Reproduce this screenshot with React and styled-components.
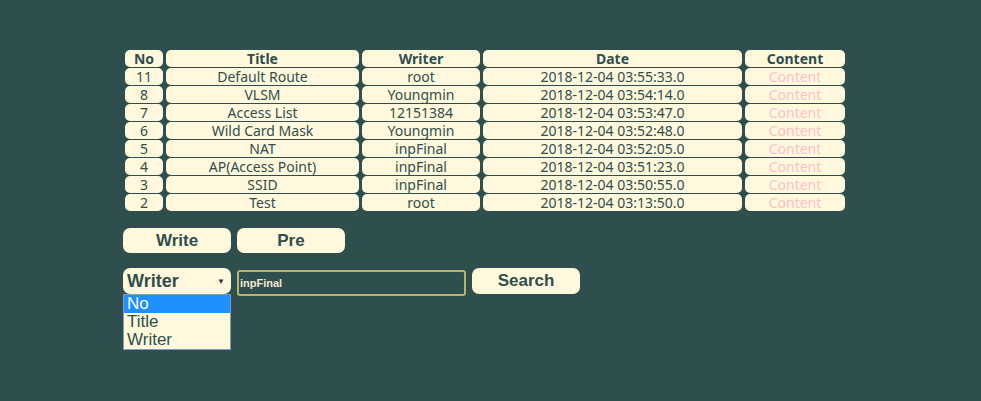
import React from "react";
import styled, { createGlobalStyle } from "styled-components";

const Global = createGlobalStyle`
  html, body { margin: 0; padding: 0; background: #2f4f4f; }
  body { width: 981px; height: 401px; overflow: hidden; }
`;

const Page = styled.div`
  padding: 49px 0 0 123px;
  display: flex;
  flex-direction: column;
  align-items: flex-start;
`;

const Table = styled.table`
  border-collapse: separate;
  border-spacing: 3px 1px;
  margin-left: -1px;
  font-family: "Noto Sans", "Open Sans", sans-serif;
  font-size: 14px;
  color: #2f4f4f;
`;

const Th = styled.th`
  background: #fff8dc;
  border-radius: 5px;
  height: 17px;
  padding: 0;
  line-height: 17px;
  font-weight: 700;
  width: ${(p) => p.$w}px;
`;

const Td = styled.td`
  background: #fff8dc;
  border-radius: 5px;
  height: 17px;
  padding: 0;
  line-height: 17px;
  text-align: center;
  color: ${(p) => (p.$pink ? "#ffc0cb" : "#2f4f4f")};
`;

const ButtonRow = styled.div`
  display: flex;
  gap: 6px;
  margin-top: ${(p) => p.$top}px;
  align-items: flex-start;
`;

const Button = styled.button`
  width: 108px;
  height: ${(p) => p.$h || 25}px;
  border: none;
  border-radius: 7px;
  background: #fff8dc;
  color: #2f4f4f;
  font-family: "Liberation Sans", Arial, sans-serif;
  font-weight: 700;
  font-size: 17px;
  padding: 0;
  box-sizing: border-box;
`;

const SelectWrap = styled.div`
  position: relative;
  width: 108px;
`;

const SelectBox = styled.div`
  height: 26px;
  border-radius: 7px;
  background: #fff8dc;
  color: #2f4f4f;
  font-family: "Liberation Sans", Arial, sans-serif;
  font-weight: 700;
  font-size: 18px;
  display: flex;
  align-items: center;
  justify-content: space-between;
  padding: 0 6px 0 4px;
  box-sizing: border-box;
`;

const Arrow = styled.span`
  font-size: 8px;
  color: #333;
`;

const OptionList = styled.ul`
  position: absolute;
  left: 0;
  top: 26px;
  width: 108px;
  margin: 0;
  padding: 0;
  list-style: none;
  background: #fff8dc;
  border: 1px solid #7f9db9;
  box-sizing: border-box;
  font-family: "Liberation Sans", Arial, sans-serif;
  font-size: 17px;
  color: #2f4f4f;
`;

const Option = styled.li`
  height: 18px;
  line-height: 18px;
  padding-left: 3px;
  overflow: hidden;
  background: ${(p) => (p.$active ? "#1e90ff" : "transparent")};
  color: ${(p) => (p.$active ? "#ffffff" : "#2f4f4f")};
`;

const Input = styled.div`
  width: 229px;
  height: 26px;
  margin-top: 2px;
  box-sizing: border-box;
  border: 2px solid #b9b36c;
  border-radius: 3px;
  color: #f3e6d4;
  font-family: "Liberation Sans", Arial, sans-serif;
  font-weight: 700;
  font-size: 11px;
  display: flex;
  align-items: center;
  padding-left: 1px;
`;

const rows = [
  ["11", "Default Route", "root", "2018-12-04 03:55:33.0"],
  ["8", "VLSM", "Youngmin", "2018-12-04 03:54:14.0"],
  ["7", "Access List", "12151384", "2018-12-04 03:53:47.0"],
  ["6", "Wild Card Mask", "Youngmin", "2018-12-04 03:52:48.0"],
  ["5", "NAT", "inpFinal", "2018-12-04 03:52:05.0"],
  ["4", "AP(Access Point)", "inpFinal", "2018-12-04 03:51:23.0"],
  ["3", "SSID", "inpFinal", "2018-12-04 03:50:55.0"],
  ["2", "Test", "root", "2018-12-04 03:13:50.0"],
];

export default function App() {
  return (
    <>
      <Global />
      <Page>
        <Table>
          <thead>
            <tr>
              <Th $w={38}>No</Th>
              <Th $w={193}>Title</Th>
              <Th $w={118}>Writer</Th>
              <Th $w={259}>Date</Th>
              <Th $w={100}>Content</Th>
            </tr>
          </thead>
          <tbody>
            {rows.map((r) => (
              <tr key={r[0]}>
                <Td>{r[0]}</Td>
                <Td>{r[1]}</Td>
                <Td>{r[2]}</Td>
                <Td>{r[3]}</Td>
                <Td $pink>Content</Td>
              </tr>
            ))}
          </tbody>
        </Table>
        <ButtonRow $top={16}>
          <Button>Write</Button>
          <Button>Pre</Button>
        </ButtonRow>
        <ButtonRow $top={15}>
          <SelectWrap>
            <SelectBox>
              <span>Writer</span>
              <Arrow>▼</Arrow>
            </SelectBox>
            <OptionList>
              <Option $active>No</Option>
              <Option>Title</Option>
              <Option>Writer</Option>
            </OptionList>
          </SelectWrap>
          <Input>inpFinal</Input>
          <Button $h={26}>Search</Button>
        </ButtonRow>
      </Page>
    </>
  );
}
